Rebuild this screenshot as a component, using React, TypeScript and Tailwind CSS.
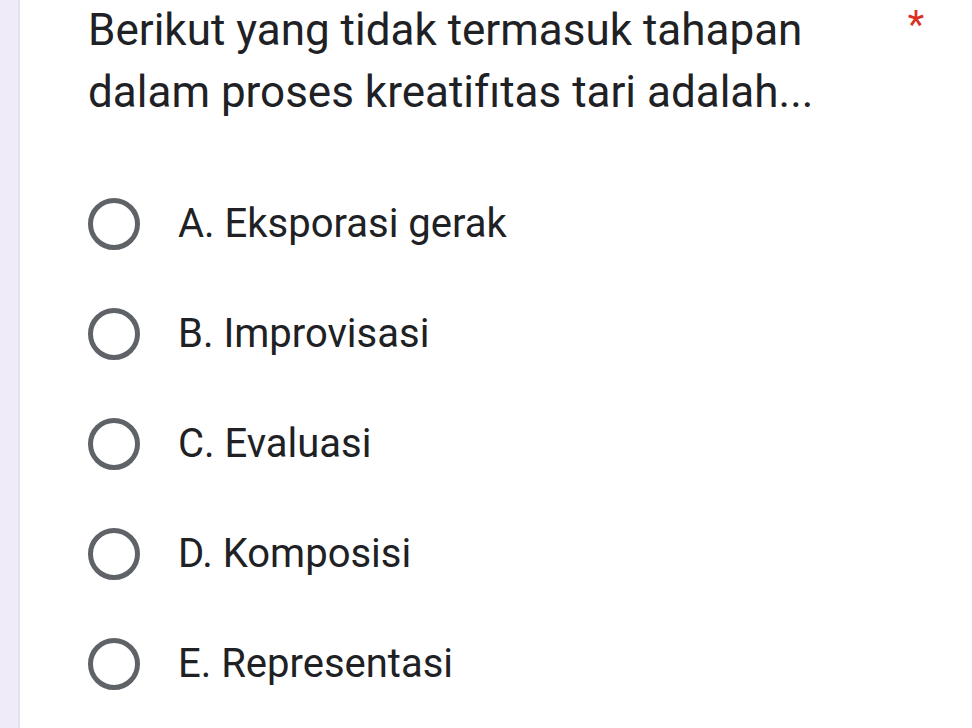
const options = [
  "A. Eksporasi gerak",
  "B. Improvisasi",
  "C. Evaluasi",
  "D. Komposisi",
  "E. Representasi",
];

export default function App() {
  return (
    <div className="flex min-h-[728px] w-full bg-white font-['Roboto',sans-serif] text-[#202124]">
      <div className="w-[20px] shrink-0 border-r-2 border-[#e3e0ec] bg-[#f0ebf8]" />
      <main className="flex-1 pl-[68px] pr-[48px]">
        <div className="flex items-start">
          <h1 className="-mt-[1px] w-[760px] text-[44px] font-normal leading-[62px]">
            Berikut yang tidak termasuk tahapan dalam proses kreatifıtas tari adalah...
          </h1>
          <span className="ml-auto pt-[5px] text-[38px] leading-[40px] text-[#d93025]">*</span>
        </div>

        <div className="mt-[75px] flex flex-col gap-[58px]">
          {options.map((opt) => (
            <label key={opt} className="flex h-[52px] items-center gap-[38px]">
              <span className="h-[52px] w-[52px] shrink-0 rounded-full border-[5px] border-[#5f6368]" />
              <span className="text-[40px] leading-[52px]">{opt}</span>
            </label>
          ))}
        </div>
      </main>
    </div>
  );
}
